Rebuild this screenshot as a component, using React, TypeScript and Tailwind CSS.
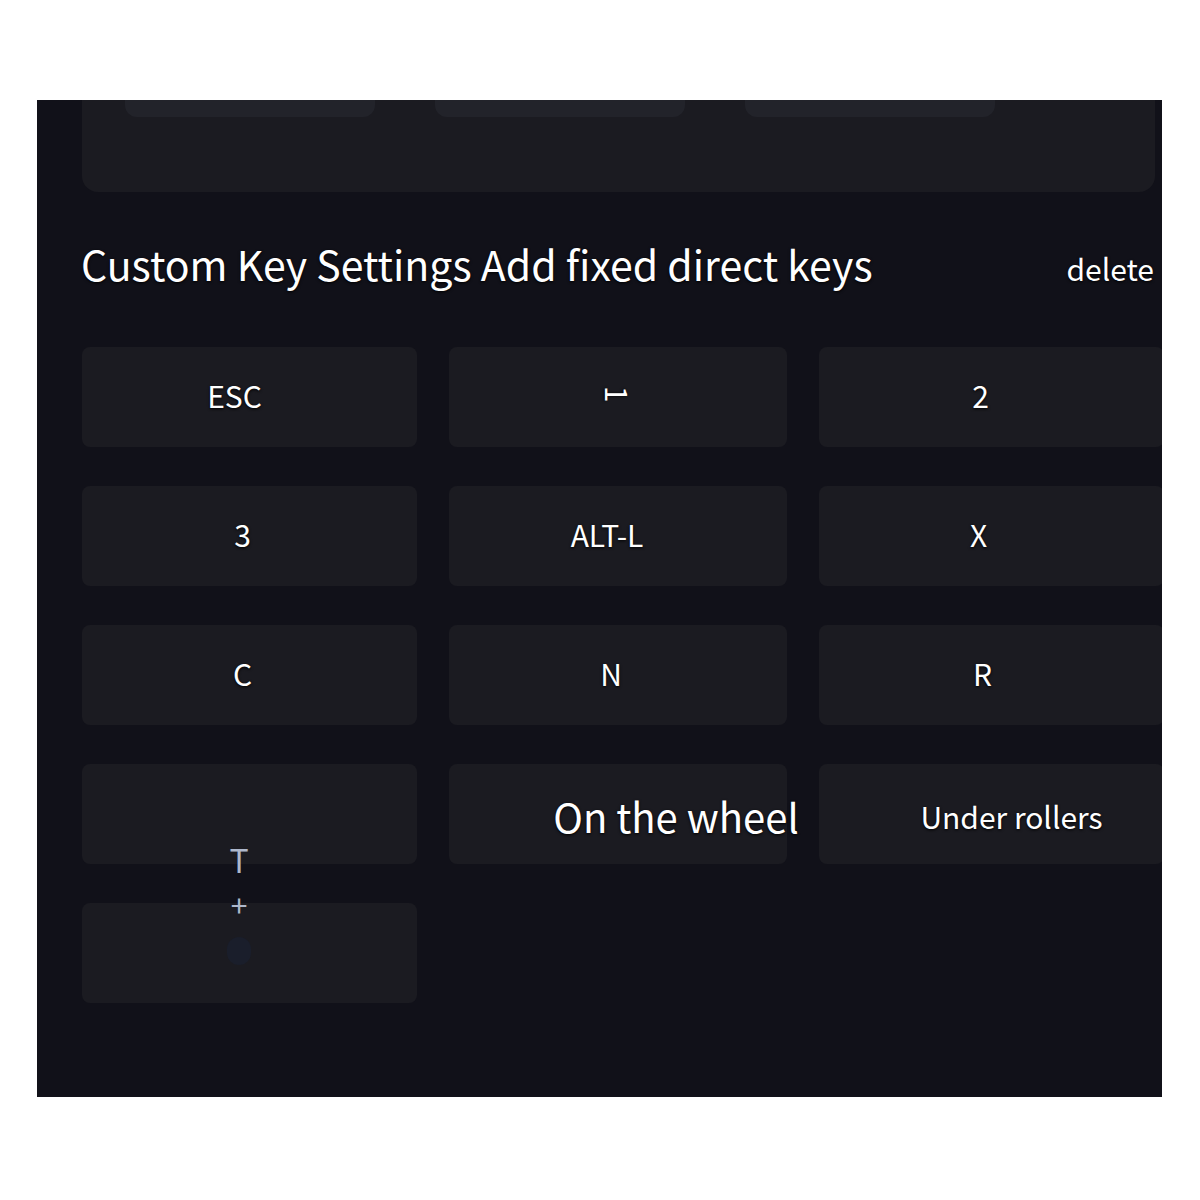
const keys: { label: string; cls?: string }[] = [
  { label: "ESC", cls: "pr-[30px]" },
  { label: "1", cls: "rotate-90 text-[24px] pr-[2px]" },
  { label: "2", cls: "pr-[22px]" },
  { label: "3", cls: "pr-[14px]" },
  { label: "ALT-L", cls: "pr-[22px]" },
  { label: "X", cls: "pr-[26px]" },
  { label: "C", cls: "pr-[14px]" },
  { label: "N", cls: "pr-[14px]" },
  { label: "R", cls: "pr-[18px]" },
  { label: "" },
  { label: "On the wheel", cls: "text-[40px] pl-[116px] pt-[8px]" },
  { label: "Under rollers", cls: "text-[29px] pl-[40px] pt-[8px]" },
  { label: "" },
];

export default function App() {
  return (
    <div className="w-[1200px] h-[1200px] bg-white pt-[100px] pl-[37px]" style={{ fontFamily: '"Noto Sans CJK SC", "Noto Sans", sans-serif' }}>
      <div className="relative w-[1125px] h-[997px] bg-[#111119] overflow-hidden">
        {/* partially scrolled-off card */}
        <div className="ml-[45px] w-[1073px] h-[92px] rounded-b-2xl bg-[#1b1b21] flex gap-[60px] pl-[43px]">
          <div className="w-[250px] h-[17px] rounded-b-xl bg-[#22232a]" />
          <div className="w-[250px] h-[17px] rounded-b-xl bg-[#22232a]" />
          <div className="w-[250px] h-[17px] rounded-b-xl bg-[#22232a]" />
        </div>

        {/* header */}
        <div className="flex items-center justify-between pl-[44px] pr-[8px] h-[150px] pb-[8px]">
          <h2 className="text-[41px] leading-none text-white whitespace-nowrap [text-shadow:0_1px_3px_#000]">
            Custom Key Settings Add fixed direct keys
          </h2>
          <span className="text-[30px] leading-none text-white mt-[10px] [text-shadow:0_1px_3px_#000]">delete</span>
        </div>

        {/* key grid */}
        <div className="relative mt-[5px] ml-[45px] grid grid-cols-[335px_338px_345px] gap-x-[32px] auto-rows-[100px] gap-y-[39px]">
          {keys.map((k, i) => (
            <div key={i} className="rounded-lg bg-[#1b1b21] flex items-center justify-center overflow-visible pb-[5px]">
              {k.label && (
                <span className={`block leading-none whitespace-nowrap text-white text-[30px] [text-shadow:0_1px_3px_#000] ${k.cls ?? ""}`}>
                  {k.label}
                </span>
              )}
            </div>
          ))}

          {/* floating drag hint over the left column */}
          <div className="absolute left-[145px] top-[496px] flex flex-col items-center text-[#aeb8cc] leading-none">
            <span className="text-[32px]">T</span>
            <span className="text-[30px] mt-[14px]">+</span>
            <span className="mt-[18px] w-[24px] h-[28px] rounded-full bg-[#1a1e2b]" />
          </div>
        </div>
      </div>
    </div>
  );
}
